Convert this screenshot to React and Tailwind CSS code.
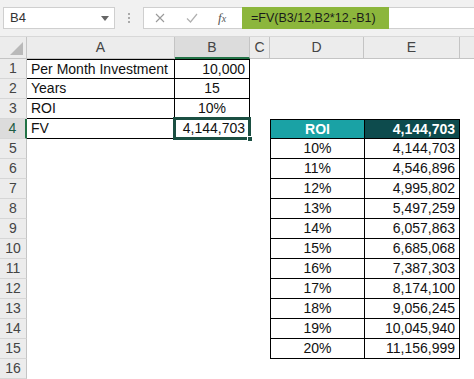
import React from 'react'

const cols = [
  { key: 'A', w: 'w-[148px]' },
  { key: 'B', w: 'w-[75px]' },
  { key: 'C', w: 'w-[20px]' },
  { key: 'D', w: 'w-[94px]' },
  { key: 'E', w: 'w-[96px]' },
]

const inputs = [
  { label: 'Per Month Investment', value: '10,000', align: 'justify-end' },
  { label: 'Years', value: '15', align: 'justify-center' },
  { label: 'ROI', value: '10%', align: 'justify-center' },
  { label: 'FV', value: '4,144,703', align: 'justify-end' },
]

const table = [
  ['10%', '4,144,703'],
  ['11%', '4,546,896'],
  ['12%', '4,995,802'],
  ['13%', '5,497,259'],
  ['14%', '6,057,863'],
  ['15%', '6,685,068'],
  ['16%', '7,387,303'],
  ['17%', '8,174,100'],
  ['18%', '9,056,245'],
  ['19%', '10,045,940'],
  ['20%', '11,156,999'],
]

function RowHead({ n }) {
  const sel = n === 4
  return (
    <div
      className={
        'w-[27px] shrink-0 flex items-center justify-center border-b border-[#d6d6d6] text-[14px] ' +
        (sel ? 'bg-[#dcdcdc] text-[#1e5c44] border-r-2 border-r-[#217346]' : 'bg-[#ececec] text-[#444] border-r border-r-[#c4c4c4]')
      }
    >
      {n}
    </div>
  )
}

function App() {
  const rows = []
  for (let n = 1; n <= 16; n++) {
    const inp = inputs[n - 1]
    const tIdx = n - 5
    const trow = n === 4 ? 'head' : tIdx >= 0 && tIdx < table.length ? table[tIdx] : null

    rows.push(
      <div key={n} className="flex h-[20px]">
        <RowHead n={n} />
        {/* column A */}
        <div
          className={
            'w-[148px] shrink-0 flex items-center px-[4px] ' +
            (inp ? 'border-b border-r border-black ' : '') +
            (n === 1 ? 'border-t ' : '')
          }
        >
          {inp && inp.label}
        </div>
        {/* column B */}
        <div
          className={
            'relative w-[75px] shrink-0 flex items-center px-[4px] ' +
            (inp ? 'border-b border-r border-black ' + inp.align + ' ' : '') +
            (n === 1 ? 'border-t ' : '')
          }
        >
          {inp && inp.value}
          {n === 4 && (
            <div className="absolute -left-[2px] -top-[2px] -right-[2px] -bottom-[2px] border-[3px] border-[#1b4f42]">
              <div className="absolute -right-[5px] -bottom-[5px] w-[6px] h-[6px] bg-[#1b4f42] border border-white" />
            </div>
          )}
        </div>
        {/* column C */}
        <div className="w-[20px] shrink-0" />
        {/* column D / E */}
        {trow === 'head' ? (
          <>
            <div className="w-[94px] shrink-0 flex items-center justify-center bg-[#1aa2a5] text-white font-bold border border-black border-r-0">
              ROI
            </div>
            <div className="w-[96px] shrink-0 flex items-center justify-end px-[4px] bg-[#0d4b4d] text-white font-bold border border-black">
              4,144,703
            </div>
          </>
        ) : trow ? (
          <>
            <div className="w-[94px] shrink-0 flex items-center justify-center border-l border-b border-black">
              {trow[0]}
            </div>
            <div className="w-[96px] shrink-0 flex items-center justify-end px-[4px] border-l border-r border-b border-black">
              {trow[1]}
            </div>
          </>
        ) : (
          <div className="w-[190px] shrink-0" />
        )}
        <div className="flex-1" />
      </div>
    )
  }

  return (
    <div
      className="w-[474px] h-[379px] overflow-hidden bg-white text-[14px] text-[#111]"
      style={{ fontFamily: '"Liberation Sans", Arial, sans-serif' }}
    >
      {/* formula bar */}
      <div className="h-[37px] bg-[#f1f1f1] flex items-center pl-[3px] border-b border-[#d8d8d8]">
        <div className="w-[112px] h-[22px] bg-white border border-[#cfcfcf] flex items-center justify-between pl-[6px] pr-[5px] text-[13px] text-[#333]">
          <span>B4</span>
          <svg width="8" height="5" viewBox="0 0 8 5">
            <path d="M0 0 L8 0 L4 5 Z" fill="#666" />
          </svg>
        </div>
        <div className="w-[28px] flex flex-col items-center gap-[2px]">
          <div className="w-[2px] h-[2px] bg-[#aaa]" />
          <div className="w-[2px] h-[2px] bg-[#aaa]" />
          <div className="w-[2px] h-[2px] bg-[#aaa]" />
        </div>
        <div className="flex-1 h-[22px] bg-white border border-[#cfcfcf] border-r-0 flex items-center">
          <div className="w-[98px] flex items-center">
            <svg className="ml-[11px]" width="10" height="10" viewBox="0 0 10 10">
              <path d="M1 1 L9 9 M9 1 L1 9" stroke="#9a9a9a" strokeWidth="1.1" />
            </svg>
            <svg className="ml-[21px]" width="12" height="10" viewBox="0 0 12 10">
              <path d="M1 5.5 L4.5 9 L11 1" stroke="#b0b0b0" strokeWidth="1.2" fill="none" />
            </svg>
            <span
              className="ml-[20px] italic text-[13px] text-[#555]"
              style={{ fontFamily: '"Liberation Serif", serif' }}
            >
              f<span className="text-[10px]">x</span>
            </span>
          </div>
          <div className="w-[147px] h-[22px] -my-[1px] bg-[#8cb63c] flex items-center pl-[9px] text-[12.5px] text-[#1a1a1a]">
            =FV(B3/12,B2*12,-B1)
          </div>
        </div>
      </div>

      {/* column headers */}
      <div className="flex h-[22px] bg-[#ececec] text-[14px] text-[#444]">
        <div className="w-[27px] shrink-0 border-r border-b border-[#c4c4c4] flex items-end justify-end pr-[3px] pb-[3px]">
          <svg width="13" height="13" viewBox="0 0 13 13">
            <path d="M13 0 L13 13 L0 13 Z" fill="#b9b9b9" />
          </svg>
        </div>
        {cols.map((c) => (
          <div
            key={c.key}
            className={
              c.w +
              ' shrink-0 flex items-center justify-center border-r border-[#c4c4c4] ' +
              (c.key === 'B' ? 'bg-[#dcdcdc] border-b-2 border-b-[#217346]' : 'border-b border-b-[#c4c4c4]')
            }
          >
            {c.key}
          </div>
        ))}
        <div className="flex-1 border-b border-[#c4c4c4]" />
      </div>

      {rows}
    </div>
  )
}

export default App
